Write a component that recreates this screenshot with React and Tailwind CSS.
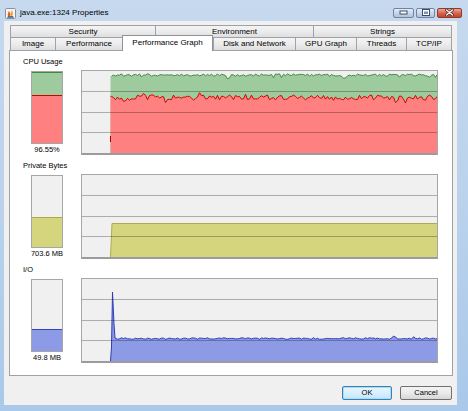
import React from "react";

function rng(seed) {
  let s = seed >>> 0;
  return () => {
    s = (Math.imul(s, 1664525) + 1013904223) >>> 0;
    return s / 4294967296;
  };
}

const GW = 355;
const GH = 82;
const X0 = 28.5;
const xs = [];
for (let x = 29.5; x < GW; x += 2) xs.push(x);
xs.push(GW);

const r1 = rng(12345);
const greenY = xs.map(() => 4 + (r1() - 0.5) * 2.6 + (r1() < 0.06 ? 2.5 : 0));
const redY = xs.map(() => 26.5 + (r1() - 0.5) * 5 + (r1() < 0.08 ? -2.5 : 0) + (r1() < 0.05 ? 3 : 0));
const r3 = rng(999);
const blueY = xs.map((x) => 59.5 + (r3() - 0.5) * 1.6 + (r3() < 0.04 ? -1.5 : 0));

const pts = (ys) => xs.map((x, i) => `L${x.toFixed(1)},${ys[i].toFixed(1)}`).join(" ");

const greenLine = `M${X0 + 1},${greenY[0].toFixed(1)} ${pts(greenY)}`;
const greenFill = `M${X0},${GH} L${X0},${greenY[0].toFixed(1)} ${pts(greenY)} L${GW},${GH} Z`;
const redLine = `M${X0},${redY[0].toFixed(1)} ${pts(redY)}`;
const redFill = `M${X0},${GH} L${X0},${redY[0].toFixed(1)} ${pts(redY)} L${GW},${GH} Z`;

const blueBody = xs
  .map((x, i) => (x >= 34 ? `L${x.toFixed(1)},${blueY[i].toFixed(1)}` : ""))
  .join(" ");
const blueLine = `M${X0},${GH} L${X0 + 1},68 L${X0 + 2},13 L${X0 + 3.5},45 L${X0 + 4.5},59 ${blueBody}`;
const blueFill = `${blueLine} L${GW},${GH} Z`;

function Grid() {
  return (
    <g stroke="rgba(0,0,0,0.28)" strokeWidth="1">
      <line x1="0" x2={GW} y1="20.5" y2="20.5" />
      <line x1="0" x2={GW} y1="41.5" y2="41.5" />
      <line x1="0" x2={GW} y1="61.5" y2="61.5" />
    </g>
  );
}

function Graph({ children }) {
  return (
    <div className="w-[357px] h-[85px] border border-[#a6a6a6] border-b-2 border-b-[#9c9c9c] bg-[#f0f0f0]">
      <svg width={GW} height={GH} viewBox={`0 0 ${GW} ${GH}`} className="block">
        {children}
        <Grid />
      </svg>
    </div>
  );
}

function Section({ label, value, meter, graph }) {
  return (
    <div className="flex flex-col">
      <div className="h-[10px] leading-[10px] text-[7.5px] pl-[13px] text-[#000000]">{label}</div>
      <div className="mt-[3px] flex">
        <div className="ml-[21px] w-[32px] flex flex-col items-center">
          <div className="mt-[1px] w-[32px] h-[73px] border border-[#a6a6a6] bg-[#f0f0f0] flex flex-col justify-end">
            {meter}
          </div>
          <div className="mt-[1px] h-[10px] leading-[10px] text-[7.5px] text-black whitespace-nowrap">{value}</div>
        </div>
        <div className="ml-[18px]">{graph}</div>
      </div>
    </div>
  );
}

function Tab({ w, children, last, selected }) {
  if (selected) {
    return (
      <div
        className={`${w} h-[16px] -mb-[1px] relative z-10 bg-white border-t border-l border-r border-[#8e939b] flex items-start justify-center pt-[2px] leading-[10px] text-[8px] text-black whitespace-nowrap`}
      >
        {children}
      </div>
    );
  }
  return (
    <div
      className={`${w} h-full border-t border-l ${last ? "border-r" : ""} border-[#9da2aa] bg-gradient-to-b from-[#f4f4f4] via-[#ececec] to-[#dedede] flex items-center justify-center text-[8px] leading-[10px] text-black whitespace-nowrap`}
    >
      {children}
    </div>
  );
}

function JavaIcon() {
  return (
    <svg width="11" height="12" viewBox="0 0 11 12">
      <rect x="0.5" y="1.5" width="10" height="10" rx="1" fill="#f4f4f4" stroke="#8a8f96" />
      <path d="M2 10 L9 10 L8.5 11 L2.5 11 Z" fill="#7b8796" />
      <path d="M3 9 C2 7 4 6 3.5 4 C5.5 5 6 7 4.8 9 Z" fill="#e0601a" />
      <path d="M5.5 9 C5 7.5 7 6.5 6.3 3 C8.5 5 8 7.5 7 9 Z" fill="#f09a2a" />
      <path d="M2.5 9 L8.5 9 L8 10 L3 10 Z" fill="#3b6fb8" />
    </svg>
  );
}

function CaptionButtons() {
  return (
    <div className="ml-auto flex items-center gap-[2px]">
      <div className="w-[21px] h-[10px] rounded-[2px] border border-[#6f84a0] bg-gradient-to-b from-[#e4edf7] via-[#c9d7e8] to-[#aec3dc] flex items-center justify-center">
        <svg width="9" height="5" viewBox="0 0 9 5">
          <rect x="1" y="1" width="7" height="3" fill="#fff" stroke="#3b4d66" strokeWidth="1" />
        </svg>
      </div>
      <div className="w-[19px] h-[10px] rounded-[2px] border border-[#6f84a0] bg-gradient-to-b from-[#e4edf7] via-[#c9d7e8] to-[#aec3dc] flex items-center justify-center">
        <svg width="8" height="7" viewBox="0 0 8 7">
          <rect x="0.5" y="0.5" width="7" height="6" fill="#fff" stroke="#3b4d66" strokeWidth="1" />
          <rect x="2" y="2.5" width="4" height="2.5" fill="#7f93ad" />
        </svg>
      </div>
      <div className="w-[25px] h-[10px] rounded-[2px] border border-[#8d3a2c] bg-gradient-to-b from-[#eaa796] via-[#d7674f] to-[#c2442b] flex items-center justify-center">
        <svg width="9" height="7" viewBox="0 0 9 7">
          <path d="M1.5 1 L7.5 6 M7.5 1 L1.5 6" stroke="#3a1510" strokeWidth="2.6" strokeLinecap="round" />
          <path d="M1.5 1 L7.5 6 M7.5 1 L1.5 6" stroke="#ffffff" strokeWidth="1.4" strokeLinecap="round" />
        </svg>
      </div>
    </div>
  );
}

export default function App() {
  return (
    <div
      className="w-[468px] h-[411px] flex flex-col bg-gradient-to-b from-[#c6d9ee] via-[#bad2ec] to-[#a9c8ea] overflow-hidden"
      style={{ fontFamily: '"Liberation Sans", Arial, sans-serif' }}
    >
      {/* Title bar */}
      <div className="h-[21px] flex items-center pl-[5px] pr-[6px] pt-[4px] shrink-0">
        <JavaIcon />
        <span className="ml-[4px] text-[8px] leading-[10px] text-black">java.exe:1324 Properties</span>
        <CaptionButtons />
      </div>

      {/* Body */}
      <div className="ml-[4px] w-[453px] h-[384px] bg-[#f0f0f0] flex flex-col pt-[4px] shrink-0">
        {/* Tabs */}
        <div className="ml-[6px] w-[442px] flex flex-col">
          <div className="h-[12px] flex">
            <Tab w="w-[145px]">Security</Tab>
            <Tab w="w-[158px]">Environment</Tab>
            <Tab w="w-[139px]" last>Strings</Tab>
          </div>
          <div className="h-[13px] flex items-end">
            <Tab w="w-[45px]">Image</Tab>
            <Tab w="w-[67px]">Performance</Tab>
            <Tab w="w-[91px]" selected>Performance Graph</Tab>
            <Tab w="w-[82px]">Disk and Network</Tab>
            <Tab w="w-[61px]">GPU Graph</Tab>
            <Tab w="w-[50px]">Threads</Tab>
            <Tab w="w-[46px]" last>TCP/IP</Tab>
          </div>
        </div>

        {/* Panel */}
        <div className="ml-[5px] w-[444px] h-[326px] bg-white border border-[#9da2aa] pt-[6px] flex flex-col gap-[6px]">
          <Section
            label="CPU Usage"
            value="96.55%"
            meter={
              <>
                <div className="h-[23px] bg-[#9dcb9d] border-t border-[#3d8a3d]" />
                <div className="h-[48px] bg-[#ff8080] border-t border-[#d00000]" />
              </>
            }
            graph={
              <Graph>
                <path d={greenFill} fill="#9dcb9d" />
                <path d={greenLine} fill="none" stroke="#3d8a3d" strokeWidth="1" />
                <path d={redFill} fill="#ff8080" />
                <path d={redLine} fill="none" stroke="#d40000" strokeWidth="1" />
                <line x1={X0} x2={X0} y1="65" y2="71" stroke="#b00000" strokeWidth="1" />
              </Graph>
            }
          />
          <Section
            label="Private Bytes"
            value="703.6 MB"
            meter={<div className="h-[30px] bg-[#d5d57e] border-t border-[#a9a94a]" />}
            graph={
              <Graph>
                <path d={`M${X0},${GH} L30,48 L${GW},48 L${GW},${GH} Z`} fill="#d5d57e" />
                <path d={`M${X0},${GH} L30,48.5 L${GW},48.5`} fill="none" stroke="#adad4c" strokeWidth="1" />
              </Graph>
            }
          />
          <Section
            label="I/O"
            value="49.8  MB"
            meter={<div className="h-[22px] bg-[#8d9be7] border-t border-[#3646b8]" />}
            graph={
              <Graph>
                <path d={blueFill} fill="#8d9be7" />
                <path d={blueLine} fill="none" stroke="#2d3db6" strokeWidth="1" />
              </Graph>
            }
          />
        </div>

        {/* Buttons */}
        <div className="mt-[10px] flex justify-end gap-[8px] pr-[5px]">
          <div className="w-[50px] h-[14px] rounded-[2px] border border-[#3c7fb1] bg-gradient-to-b from-[#eaf6fd] via-[#d9f0fc] to-[#bee6fd] shadow-[inset_0_0_0_1px_#a6dcf7] flex items-center justify-center text-[7.5px] leading-[10px] text-black">
            OK
          </div>
          <div className="w-[52px] h-[14px] rounded-[2px] border border-[#707070] bg-gradient-to-b from-[#f2f2f2] via-[#ebebeb] to-[#d6d6d6] flex items-center justify-center text-[7.5px] leading-[10px] text-black">
            Cancel
          </div>
        </div>
      </div>
    </div>
  );
}
